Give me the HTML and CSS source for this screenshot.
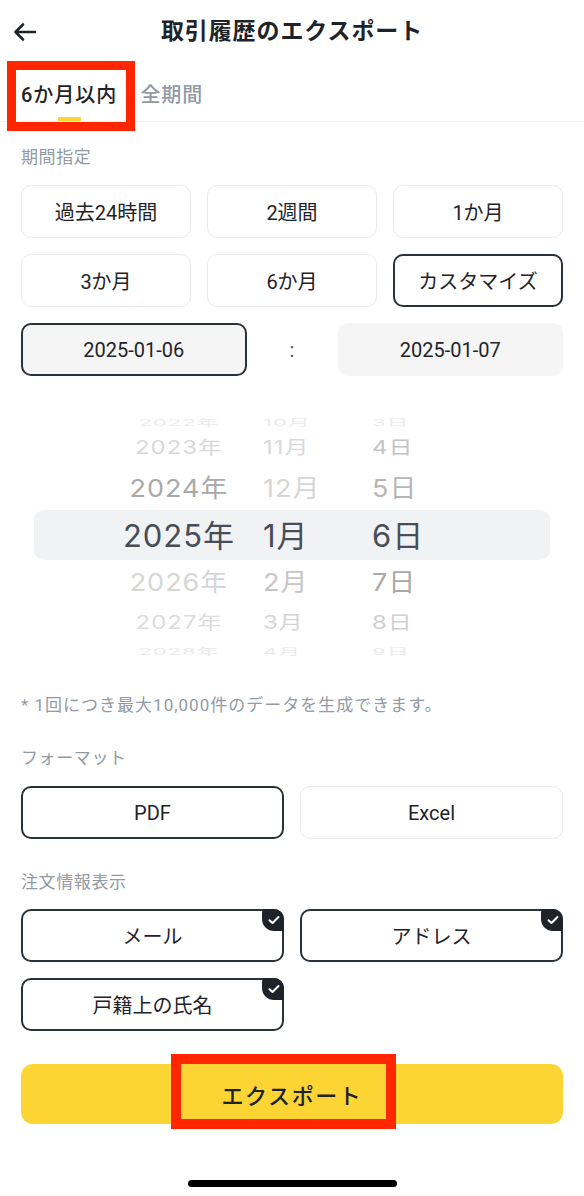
FILE: index.html
```html
<!DOCTYPE html>
<html lang="ja">
<head>
<meta charset="utf-8">
<title>取引履歴のエクスポート</title>
<link rel="stylesheet" href="styles.css">
</head>
<body>
<div class="screen">
  <header class="header">
    <div class="back">
      <svg width="24" height="24" viewBox="0 0 24 24" fill="none" stroke="#1e2329" stroke-width="2.6" stroke-linecap="round" stroke-linejoin="round"><path d="M22 12H2.5M10 4.5L2.5 12L10 19.5"/></svg>
    </div>
    <h1 class="title">取引履歴のエクスポート</h1>
    <div></div>
  </header>

  <nav class="tabs">
    <div class="tab tab-active">
      <span>6か月以内</span>
      <i class="tab-bar"></i>
      <b class="mark mark-tab"></b>
    </div>
    <div class="tab"><span>全期間</span></div>
  </nav>

  <main class="content">
    <p class="label label-first">期間指定</p>
    <div class="grid3">
      <div class="btn">過去24時間</div>
      <div class="btn">2週間</div>
      <div class="btn">1か月</div>
      <div class="btn">3か月</div>
      <div class="btn">6か月</div>
      <div class="btn btn-sel">カスタマイズ</div>
    </div>
    <div class="dates">
      <div class="date date-sel">2025-01-06</div>
      <div class="colon">:</div>
      <div class="date">2025-01-07</div>
    </div>

    <div class="picker">
      <div class="pk-row r3"><span class="c-y">2022年</span><span class="c-m">10月</span><span class="c-d">3日</span></div>
      <div class="pk-row r2 up"><span class="c-y">2023年</span><span class="c-m">11月</span><span class="c-d">4日</span></div>
      <div class="pk-row r1 up"><span class="c-y">2024年</span><span class="c-m">12月</span><span class="c-d">5日</span></div>
      <div class="pk-row r0"><span class="c-y">2025年</span><span class="c-m">1月</span><span class="c-d">6日</span></div>
      <div class="pk-row r1 down"><span class="c-y">2026年</span><span class="c-m">2月</span><span class="c-d">7日</span></div>
      <div class="pk-row r2 down"><span class="c-y">2027年</span><span class="c-m">3月</span><span class="c-d">8日</span></div>
      <div class="pk-row r3"><span class="c-y">2028年</span><span class="c-m">4月</span><span class="c-d">9日</span></div>
    </div>

    <p class="note">* 1回につき最大10,000件のデータを生成できます。</p>

    <p class="label label-fmt">フォーマット</p>
    <div class="grid2">
      <div class="btn btn-sel">PDF</div>
      <div class="btn">Excel</div>
    </div>

    <p class="label label-info">注文情報表示</p>
    <div class="grid2 checks">
      <div class="btn btn-sel">メール<span class="badge"><svg width="12" height="10" viewBox="0 0 12 10" fill="none" stroke="#fff" stroke-width="2" stroke-linecap="round" stroke-linejoin="round"><path d="M1.5 5.2L4.5 8L10.5 2"/></svg></span></div>
      <div class="btn btn-sel">アドレス<span class="badge"><svg width="12" height="10" viewBox="0 0 12 10" fill="none" stroke="#fff" stroke-width="2" stroke-linecap="round" stroke-linejoin="round"><path d="M1.5 5.2L4.5 8L10.5 2"/></svg></span></div>
      <div class="btn btn-sel">戸籍上の氏名<span class="badge"><svg width="12" height="10" viewBox="0 0 12 10" fill="none" stroke="#fff" stroke-width="2" stroke-linecap="round" stroke-linejoin="round"><path d="M1.5 5.2L4.5 8L10.5 2"/></svg></span></div>
    </div>

    <div class="export">エクスポート<b class="mark mark-export"></b></div>
  </main>

  <div class="home"></div>
</div>
</body>
</html>
```

FILE: styles.css
```css
* { box-sizing: border-box; }

html, body {
  margin: 0;
  padding: 0;
  background: #ffffff;
}

body {
  font-family: "Roboto", "Noto Sans CJK JP", sans-serif;
  color: #1e2329;
}

.screen {
  width: 584px;
  height: 1196px;
  overflow: hidden;
  display: flex;
  flex-direction: column;
}

/* header */
.header {
  height: 64px;
  display: grid;
  grid-template-columns: 60px 1fr 60px;
  align-items: center;
}
.back {
  padding-left: 13px;
  display: flex;
  align-items: center;
}
.title {
  margin: 0;
  text-align: center;
  font-size: 23px;
  font-weight: 700;
  letter-spacing: 0.9px;
  line-height: 30px;
}

/* tabs */
.tabs {
  height: 58px;
  display: flex;
  gap: 23px;
  padding-left: 21px;
  border-bottom: 1px solid #eef0f2;
}
.tab {
  position: relative;
  display: flex;
  flex-direction: column;
  align-items: center;
  padding-top: 19px;
  font-size: 20px;
  line-height: 24px;
  letter-spacing: 1px;
  font-weight: 500;
  color: #929aa5;
}
.tab-active { color: #1e2329; }
.tab-bar {
  display: block;
  width: 23px;
  height: 4px;
  margin-top: 10px;
  background: #fcd535;
  border-radius: 1px;
}

/* red annotation boxes */
.mark {
  position: absolute;
  border: 9px solid #ff2600;
  pointer-events: none;
}
.mark-tab {
  left: -14px;
  top: -3px;
  width: 128px;
  height: 70px;
}
.mark-export {
  left: 150px;
  top: -10px;
  width: 225px;
  height: 75px;
  border-width: 10px;
}

/* content */
.content {
  padding: 0 21px;
  display: flex;
  flex-direction: column;
}
.label {
  margin: 0;
  font-size: 17px;
  line-height: 24px;
  letter-spacing: 0.6px;
  color: #929aa5;
}
.label-first { margin-top: 23px; margin-bottom: 16px; }
.label-fmt { margin-top: 29px; margin-bottom: 16px; }
.label-info { margin-top: 31px; margin-bottom: 15px; }

.grid3 {
  display: grid;
  grid-template-columns: repeat(3, 1fr);
  gap: 16px;
}
.grid2 {
  display: grid;
  grid-template-columns: repeat(2, 1fr);
  gap: 16px;
}

.btn {
  position: relative;
  height: 53px;
  display: flex;
  align-items: center;
  justify-content: center;
  border: 1.5px solid #e9ebee;
  border-radius: 10px;
  font-size: 20px;
  color: #1e2329;
  background: #fff;
}
.btn-sel {
  border: 2px solid #2b3139;
}

.dates {
  margin-top: 16px;
  display: grid;
  grid-template-columns: 1fr 91px 1fr;
  height: 53px;
}
.date {
  display: flex;
  align-items: center;
  justify-content: center;
  background: #f5f5f5;
  border-radius: 10px;
  font-size: 20px;
}
.date-sel {
  border: 2px solid #2b3139;
}
.colon {
  display: flex;
  align-items: center;
  justify-content: center;
  font-size: 20px;
  color: #474d57;
}

/* wheel picker */
.picker {
  margin: 0 -21px;
  padding-top: 36px;
  display: flex;
  flex-direction: column;
  font-family: "Inter", "Noto Sans CJK JP", sans-serif;
}
.pk-row {
  display: grid;
  grid-template-columns: 118px 134px 1fr;
  padding-left: 120px;
  align-items: center;
  white-space: nowrap;
  letter-spacing: 1px;
}
.pk-row span { display: block; line-height: 1; }
.pk-row .c-y { text-align: center; }
.pk-row .c-m { padding-left: 25px; }
.yr { margin-right: 5px; }

.r0 {
  height: 50px;
  margin: 0 34px;
  padding-left: 86px;
  background: #f1f2f4;
  border-radius: 10px;
  font-size: 31px;
  color: #474d57;
}
.r1 {
  height: 44px;
  font-size: 27px;
}
.r1 span { transform: scaleY(0.92); }
.r2 {
  height: 37px;
  font-size: 24px;
}
.r2 span { transform: scaleY(0.78); }
.r3 {
  height: 17px;
  font-size: 22px;
  color: #ebebeb;
}
.r3 span { transform: scaleY(0.42); }

.r1.up .c-y { color: #a9a9a9; }
.r1.up .c-m { color: #d6d6d6; }
.r1.up .c-d { color: #b6b6b6; }
.r1.down .c-y { color: #d6d6d6; }
.r1.down .c-m { color: #c6c6c6; }
.r1.down .c-d { color: #a9a9a9; }
.r2.up .c-y, .r2.up .c-m { color: #d9d9d9; }
.r2.up .c-d { color: #c4c4c4; }
.r2.down .c-y { color: #dcdcdc; }
.r2.down .c-m { color: #d4d4d4; }
.r2.down .c-d { color: #d0d0d0; }

.note {
  margin: 35px 0 0;
  font-size: 17px;
  line-height: 24px;
  letter-spacing: 1px;
  color: #929aa5;
}

/* check badges */
.badge {
  position: absolute;
  top: -2px;
  right: -2px;
  width: 22px;
  height: 22px;
  background: #1e2329;
  border-radius: 4px 10px 0 12px;
  display: flex;
  align-items: center;
  justify-content: center;
  padding: 0 0 1px 1px;
}

/* export */
.export {
  position: relative;
  margin-top: 33px;
  height: 60px;
  border-radius: 12px;
  background: #fcd535;
  display: flex;
  align-items: center;
  justify-content: center;
  font-size: 22px;
  font-weight: 500;
  letter-spacing: 1.6px;
  color: #1e2329;
}

.home {
  margin: 56px auto 0;
  width: 209px;
  height: 7px;
  border-radius: 4px;
  background: #000;
}
```
